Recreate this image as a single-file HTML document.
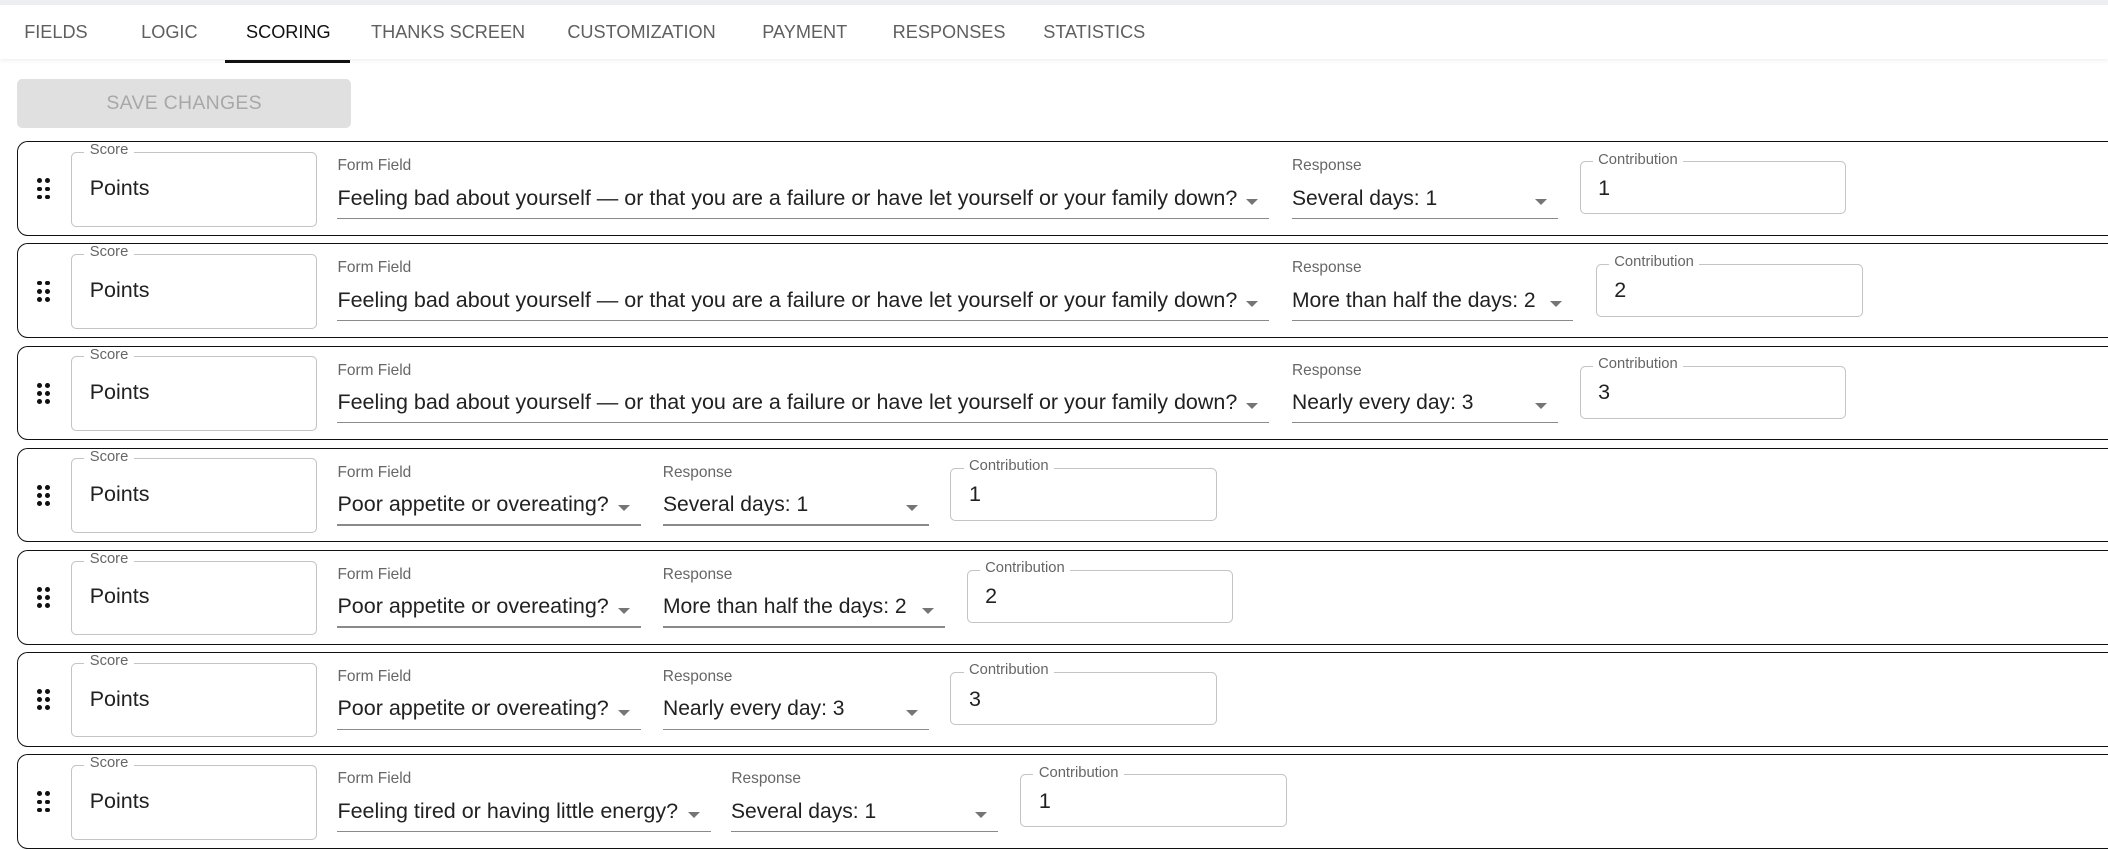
<!DOCTYPE html>
<html><head><meta charset="utf-8"><style>
html,body{margin:0;padding:0;background:#fff;overflow:hidden;width:2108px;height:850px}
#w{zoom:1.344388;width:1568px;height:633px;position:relative;font-family:"Liberation Sans",Arial,sans-serif;color:#212121}
.top{position:absolute;left:0;top:0;width:1568px;height:4px;background:#eceef1}
.tabs{position:absolute;left:0;top:4px;width:1568px;height:40px;box-shadow:0 2px 3px rgba(0,0,0,.06)}
.tab{position:absolute;top:12px;font-size:13.5px;color:#5f5f5f;letter-spacing:0}
.tab.a{color:#111}
.ul{position:absolute;left:167px;top:41px;width:93px;height:2px;background:#111}
.btn{position:absolute;left:13px;top:59px;width:248px;height:36px;background:#e0e0e0;border-radius:4px;color:#a8a8a8;font-size:14.5px;text-align:center;line-height:36px;letter-spacing:.2px}
.row{position:absolute;left:13px;width:1600px;height:69px;border:1px solid #111;border-radius:8px}
.drag{position:absolute;left:14px;top:27px;width:10px;height:16px}
.drag i{position:absolute;width:3.6px;height:3.6px;border-radius:50%;background:#111}
.ob{position:absolute;border:1px solid #c4c4c4;border-radius:4px}
.ol{position:absolute;top:-8px;left:9px;background:#fff;padding:0 4px;font-size:11px;color:#666}
.ov{position:absolute;font-size:16px;white-space:nowrap}
.lab{position:absolute;font-size:11.5px;color:#666;white-space:nowrap}
.val{position:absolute;font-size:16px;white-space:nowrap;transform-origin:left center}
.line{position:absolute;height:1px;background:#8a8a8a}
.arr{position:absolute;width:0;height:0;border-left:5px solid transparent;border-right:5px solid transparent;border-top:5px solid #757575}
</style></head><body><div id="w">
<div class="top"></div>
<div class="tabs">
<div class="tab" style="left:18px">FIELDS</div>
<div class="tab" style="left:105px">LOGIC</div>
<div class="tab a" style="left:183px">SCORING</div>
<div class="tab" style="left:276px">THANKS SCREEN</div>
<div class="tab" style="left:422px">CUSTOMIZATION</div>
<div class="tab" style="left:567px">PAYMENT</div>
<div class="tab" style="left:664px">RESPONSES</div>
<div class="tab" style="left:776px">STATISTICS</div>
<div class="ul"></div>
</div>
<div class="btn">SAVE CHANGES</div>
<div id="rows"></div>
</div>
<script>
var L="Feeling bad about yourself — or that you are a failure or have let yourself or your family down?";
var P="Poor appetite or overeating?",T="Feeling tired or having little energy?";
var R=[
[L,251,944,"Several days: 1",961,1159,1175,"1"],
[L,251,944,"More than half the days: 2",961,1170,1187,"2"],
[L,251,944,"Nearly every day: 3",961,1159,1175,"3"],
[P,251,477,"Several days: 1",493,691,707,"1"],
[P,251,477,"More than half the days: 2",493,703,719,"2"],
[P,251,477,"Nearly every day: 3",493,691,707,"3"],
[T,251,529,"Several days: 1",544,742,759,"1"]];
var h="";
R.forEach(function(r,i){
var y=105+i*76;
h+='<div class="row" style="top:'+y+'px"><div class="drag">';
[[0,0],[6,0],[0,6],[6,6],[0,12],[6,12]].forEach(function(d){h+='<i style="left:'+d[0]+'px;top:'+d[1]+'px"></i>'});
h+='</div></div>';
h+='<div class="ob" style="left:53px;top:'+(y+8)+'px;width:181px;height:54px"><div class="ol">Score</div><div class="ov" style="left:13px;top:17px">Points</div></div>';
function sel(x1,x2,lab,val,sc){
 var s='<div class="lab" style="left:'+x1+'px;top:'+(y+12)+'px">'+lab+'</div>';
 s+='<div class="val" style="left:'+x1+'px;top:'+(y+33)+'px;transform:scaleX('+sc+')">'+val+'</div>';
 s+='<div class="arr" style="left:'+(x2-17)+'px;top:'+(y+43)+'px"></div>';
 s+='<div class="line" style="left:'+x1+'px;width:'+(x2-x1)+'px;top:'+(y+57)+'px"></div>';
 return s;}
h+=sel(r[1],r[2],"Form Field",r[0],1);
h+=sel(r[4],r[5],"Response",r[3],0.98);
h+='<div class="ob" style="left:'+r[6]+'px;top:'+(y+15)+'px;width:197px;height:38px"><div class="ol">Contribution</div><div class="ov" style="left:13px;top:10px">'+r[7]+'</div></div>';
});
document.getElementById("rows").innerHTML=h;
</script>
</body></html>
